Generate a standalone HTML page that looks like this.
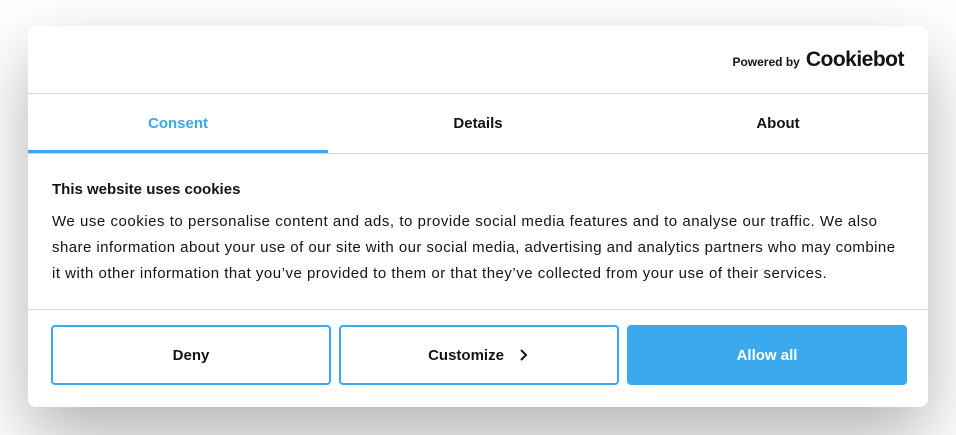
<!DOCTYPE html>
<html><head><style>
body{margin:0;width:956px;height:435px;background:#fff;font-family:"Liberation Sans",sans-serif;position:relative;overflow:hidden}
.card{position:absolute;left:28px;top:26px;width:900px;height:381px;background:#fff;border-radius:8px;box-shadow:0 30px 70px rgba(0,0,0,.3)}
.hdr{height:67px;border-bottom:1px solid #d6d6d6;position:relative}
.pb{position:absolute;right:24px;top:22px;display:flex;align-items:center;color:#141414}
.pb span{font-size:12px;font-weight:bold;margin-right:6px;margin-top:3px}
.pb b{font-size:21px;letter-spacing:-.5px;font-weight:bold}
.tabs{display:flex;height:59px;border-bottom:1px solid #d6d6d6}
.tab{flex:1;text-align:center;font-size:15px;font-weight:bold;line-height:59px;color:#141414;border-bottom:3px solid transparent}
.tab.a{color:#3ba9ee;border-color:#3ba9ee}
.body{padding:27px 24px 0 24px;height:128px;border-bottom:1px solid #d6d6d6}
h2{margin:0 0 11px;font-size:15px;color:#141414}
p{margin:0;font-size:15px;line-height:26px;color:#141414;white-space:nowrap}
p span{display:block}
</style><style>
.btns{position:absolute;left:23px;top:299px;display:flex;gap:8px}
.btn{width:276px;height:56px;border:2px solid #3ba9ee;border-radius:4px;display:flex;align-items:center;justify-content:center;font-size:15px;font-weight:bold;color:#141414;box-sizing:content-box}
.btn.f{background:#3ba9ee;color:#fff;width:280px;height:60px;border:0}
</style></head><body>
<div class="card">
<div class="hdr"><div class="pb"><span>Powered by</span><b>Cookiebot</b></div></div>
<div class="tabs"><div class="tab a">Consent</div><div class="tab">Details</div><div class="tab">About</div></div>
<div class="body"><h2>This website uses cookies</h2>
<p><span style="letter-spacing:.53px">We use cookies to personalise content and ads, to provide social media features and to analyse our traffic. We also</span><span style="letter-spacing:.45px">share information about your use of our site with our social media, advertising and analytics partners who may combine</span><span style="letter-spacing:.5px">it with other information that you’ve provided to them or that they’ve collected from your use of their services.</span></p></div>
<div class="btns"><div class="btn">Deny</div><div class="btn">Customize <svg width="12" height="12" viewBox="0 0 12 12" style="margin-left:14px"><path d="M3 1l5 5-5 5" stroke="#141414" stroke-width="2" fill="none"/></svg></div><div class="btn f">Allow all</div></div>
</div>
</body></html>
